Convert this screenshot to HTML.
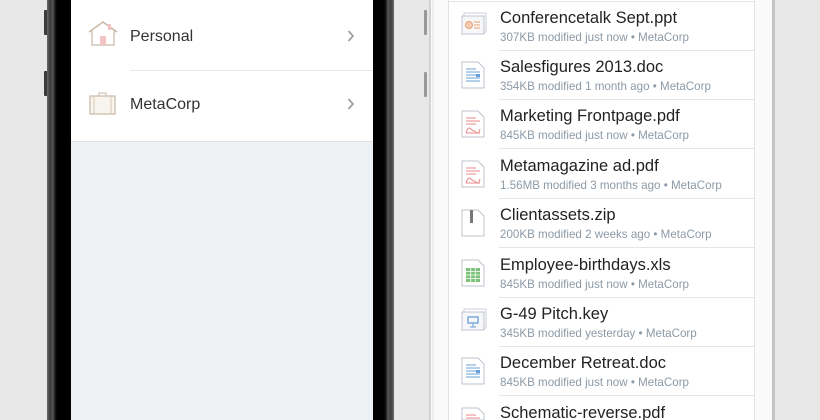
<!DOCTYPE html>
<html><head><meta charset="utf-8"><style>
*{margin:0;padding:0;box-sizing:border-box}
html,body{width:820px;height:420px;overflow:hidden}
body{background:#e7e7e7;font-family:"Liberation Sans",Arial,sans-serif;position:relative}
.abs{position:absolute}
.row{position:absolute;left:449px;width:305px;height:49px;overflow:hidden}
.row .t{position:absolute;left:51px;top:7px;font-size:16.5px;color:#222;white-space:nowrap}
.row .s{position:absolute;left:51px;top:29px;font-size:11.6px;color:#8d9aa6;white-space:nowrap}
.row .sep{position:absolute;left:50px;right:0;bottom:0;height:1px;background:#e3e6e8}
.row svg{position:absolute;left:12px;top:10px}
</style></head><body>
<!-- left phone -->
<div class="abs" style="left:44px;top:10px;width:5px;height:25px;background:#3a3a3c;border-radius:1px"></div>
<div class="abs" style="left:44px;top:71px;width:5px;height:25px;background:#3a3a3c;border-radius:1px"></div>
<div class="abs" style="left:47px;top:0;width:347px;height:420px;background:linear-gradient(90deg,#6a6a6c,#3c3c3e 3px,#555 6px,#1a1a1a 8px,#000 10px,#000 337px,#1a1a1a 339px,#555 341px,#3c3c3e 344px,#6a6a6c)"></div>
<div class="abs" style="left:71px;top:0;width:302px;height:420px;background:#eef1f3"></div>
<div class="abs" style="left:71px;top:0;width:302px;height:142px;background:#fff;border-bottom:1px solid #dde1e4"></div>
<div class="abs" style="left:130px;top:70px;width:243px;height:1px;background:#e4e6e8"></div>
<svg class="abs" style="left:87px;top:20px" width="32" height="28" viewBox="0 0 32 28"><path d="M2 12 L16 2 L30 12" fill="none" stroke="#c9b8a6" stroke-width="1.5"/><path d="M5 10 V25 H27 V10" fill="none" stroke="#c9b8a6" stroke-width="1.2"/><rect x="13" y="16" width="6" height="9" fill="#f2c2c4"/><rect x="21" y="4" width="3" height="6" fill="#f2c2c4"/></svg>
<div class="abs" style="left:130px;top:28px;font-size:16px;color:#333">Personal</div>
<svg class="abs" style="left:347px;top:30px" width="8" height="12"><path d="M1.5 1 L6 6 L1.5 11" fill="none" stroke="#9a9ea3" stroke-width="1.7"/></svg>
<svg class="abs" style="left:89px;top:91px" width="28" height="24" viewBox="0 0 28 24"><rect x="1" y="5" width="25" height="18" fill="#f8f4ee" stroke="#c9b8a6" stroke-width="1.2"/><rect x="10" y="2" width="7" height="3" fill="none" stroke="#c9b8a6"/><line x1="5" y1="5" x2="5" y2="23" stroke="#d9c8b6"/><line x1="22" y1="5" x2="22" y2="23" stroke="#d9c8b6"/></svg>
<div class="abs" style="left:130px;top:96px;font-size:16px;color:#333">MetaCorp</div>
<svg class="abs" style="left:347px;top:98px" width="8" height="12"><path d="M1.5 1 L6 6 L1.5 11" fill="none" stroke="#9a9ea3" stroke-width="1.7"/></svg>
<!-- right phone -->
<div class="abs" style="left:424px;top:10px;width:3px;height:25px;background:#999;border-radius:1px"></div>
<div class="abs" style="left:424px;top:72px;width:3px;height:25px;background:#999;border-radius:1px"></div>
<div class="abs" style="left:429px;top:0;width:346px;height:420px;background:#fafafa;border-left:2px solid #d2d2d2;border-right:3px solid #c4c4c4"></div>
<div class="abs" style="left:432px;top:0;width:2px;height:420px;background:#eee"></div>
<div class="abs" style="left:448px;top:0;width:307px;height:420px;background:#fff;border-left:1px solid #e2e2e2;border-right:1px solid #e2e2e2"></div>
<div class="abs" style="left:449px;top:1px;width:305px;height:1px;background:#e3e6e8"></div>

<div class="row" style="top:2px"><svg width="26" height="24"><rect x="3" y="1" width="22" height="19" fill="#fff" stroke="#ccd"/><rect x="1" y="4" width="22" height="18" fill="#f7f7f9" stroke="#bcc3cc"/><circle cx="8" cy="13" r="3.5" fill="#f5cdb5" stroke="#e8a070"/><path d="M13 10h6M13 13h6M13 16h6" stroke="#e8a070"/></svg><div class="t">Conferencetalk Sept.ppt</div><div class="s">307KB modified just now • MetaCorp</div><div class="sep"></div></div>
<div class="row" style="top:51px"><svg width="26" height="28"><path d="M1 1h16l6 6v20H1z" fill="#fff" stroke="#bcc3cc"/><path d="M5 8h10M5 11h14M5 14h10M5 17h14M5 20h14" stroke="#6a9fd8"/><rect x="15" y="13" width="4" height="3" fill="#6a9fd8"/></svg><div class="t">Salesfigures 2013.doc</div><div class="s">354KB modified 1 month ago • MetaCorp</div><div class="sep"></div></div>
<div class="row" style="top:100px"><svg width="26" height="28"><path d="M1 1h16l6 6v20H1z" fill="#fff" stroke="#bcc3cc"/><path d="M5 8h10M5 11h14M5 14h10" stroke="#e88a88"/><path d="M5 23c3-10 5-2 8 -2 s4 6 6 -2 M5 23h14" fill="none" stroke="#e88a88"/></svg><div class="t">Marketing Frontpage.pdf</div><div class="s">845KB modified just now • MetaCorp</div><div class="sep"></div></div>
<div class="row" style="top:150px"><svg width="26" height="28"><path d="M1 1h16l6 6v20H1z" fill="#fff" stroke="#bcc3cc"/><path d="M5 8h10M5 11h14M5 14h10" stroke="#e88a88"/><path d="M5 23c3-10 5-2 8 -2 s4 6 6 -2 M5 23h14" fill="none" stroke="#e88a88"/></svg><div class="t">Metamagazine ad.pdf</div><div class="s">1.56MB modified 3 months ago • MetaCorp</div><div class="sep"></div></div>
<div class="row" style="top:199px"><svg width="26" height="28"><path d="M1 1h16l6 6v20H1z" fill="#fff" stroke="#bcc3cc"/><rect x="9" y="1" width="3" height="13" fill="#777"/></svg><div class="t">Clientassets.zip</div><div class="s">200KB modified 2 weeks ago • MetaCorp</div><div class="sep"></div></div>
<div class="row" style="top:249px"><svg width="26" height="28"><path d="M1 1h16l6 6v20H1z" fill="#fff" stroke="#bcc3cc"/><path d="M5 9h14v14H5z" fill="#7cc07a"/><path d="M5 12.5h14M5 16h14M5 19.5h14M9.7 9v14M14.3 9v14" stroke="#fff" stroke-width="0.8"/></svg><div class="t">Employee-birthdays.xls</div><div class="s">845KB modified just now • MetaCorp</div><div class="sep"></div></div>
<div class="row" style="top:298px"><svg width="26" height="24"><rect x="3" y="1" width="22" height="19" fill="#fff" stroke="#ccd"/><rect x="1" y="4" width="22" height="18" fill="#f7f7f9" stroke="#bcc3cc"/><rect x="7" y="9" width="10" height="6" fill="none" stroke="#6a9fd8" stroke-width="1.3"/><path d="M12 15v4M9 19h6" stroke="#6a9fd8"/></svg><div class="t">G-49 Pitch.key</div><div class="s">345KB modified yesterday • MetaCorp</div><div class="sep"></div></div>
<div class="row" style="top:347px"><svg width="26" height="28"><path d="M1 1h16l6 6v20H1z" fill="#fff" stroke="#bcc3cc"/><path d="M5 8h10M5 11h14M5 14h10M5 17h14M5 20h14" stroke="#6a9fd8"/><rect x="15" y="13" width="4" height="3" fill="#6a9fd8"/></svg><div class="t">December Retreat.doc</div><div class="s">845KB modified just now • MetaCorp</div><div class="sep"></div></div>
<div class="row" style="top:397px;height:23px"><svg width="26" height="13"><path d="M1 1h16l6 6v6H1z" fill="#fff" stroke="#bcc3cc"/><path d="M5 8h10M5 11h14" stroke="#e88a88"/></svg><div class="t">Schematic-reverse.pdf</div></div>
</body></html>
